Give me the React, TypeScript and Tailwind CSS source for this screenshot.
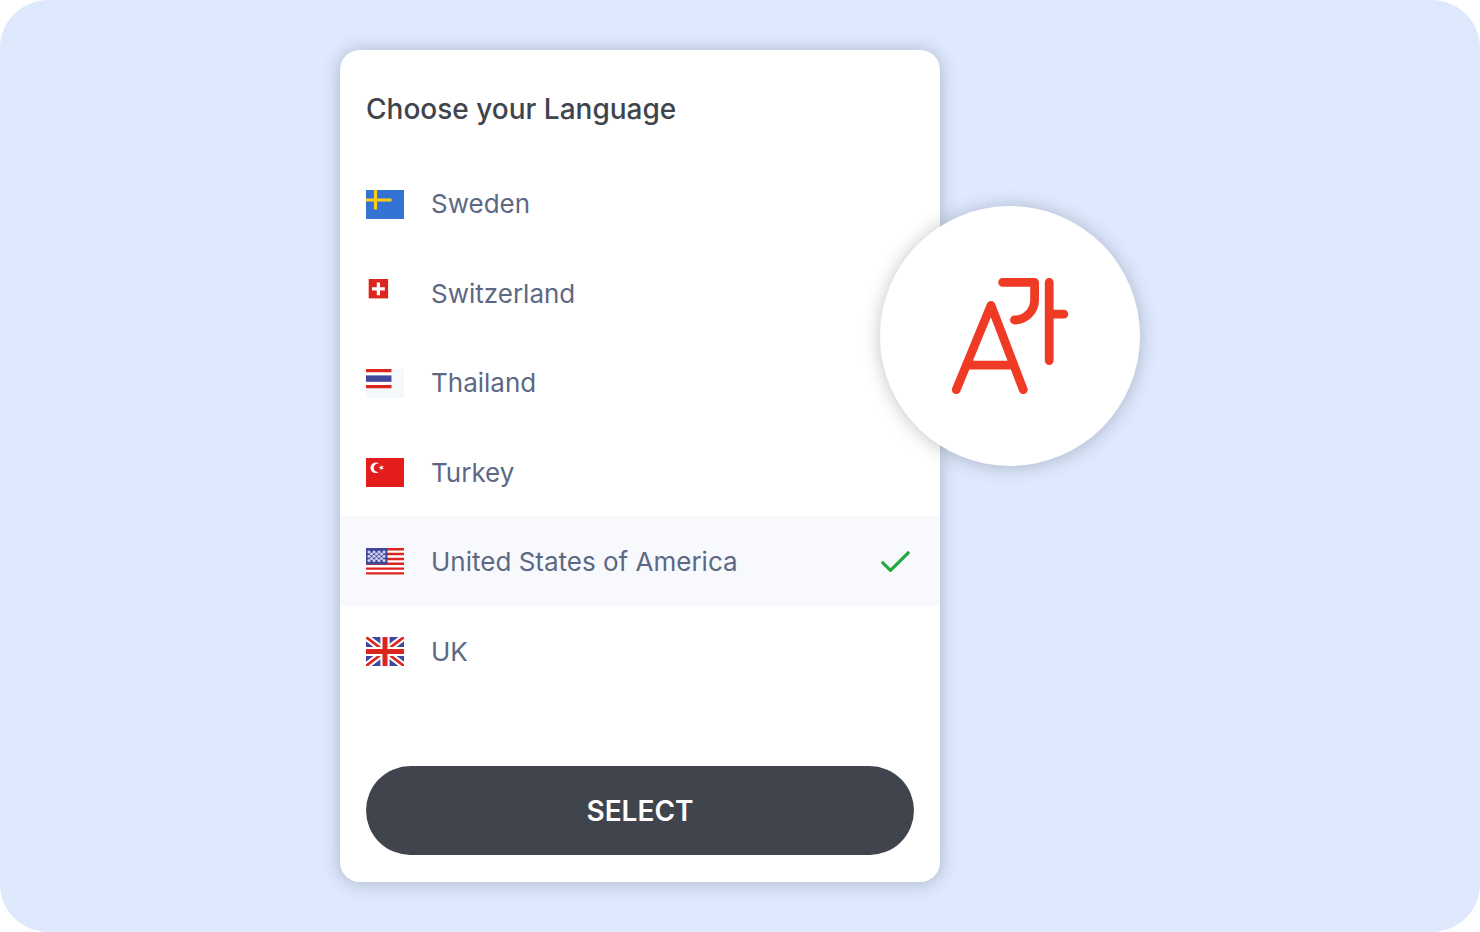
import { useState, type ReactNode } from "react";

interface Country {
  name: string;
  flag: ReactNode;
}

const usStars = [
  [4, 4], [9, 4], [14, 4], [19, 4],
  [6.5, 6], [11.5, 6], [16.5, 6],
  [4, 8.2], [9, 8.2], [14, 8.2], [19, 8.2],
  [6.5, 10.4], [11.5, 10.4], [16.5, 10.4],
  [4, 12.6], [9, 12.6], [14, 12.6], [19, 12.6],
];

const countries: Country[] = [
  {
    name: "Sweden",
    flag: (
      <>
        <rect width="38" height="29" fill="#3273d3" />
        <path d="M0 10h25.5M9.5 0v19.5" stroke="#fecb16" strokeWidth="3.2" />
      </>
    ),
  },
  {
    name: "Switzerland",
    flag: (
      <>
        <rect x="2.7" width="19.4" height="19.4" fill="#dc251c" />
        <path d="M6 9.8h12.8M12.4 3.4v12.8" stroke="#fff" strokeWidth="3.2" />
      </>
    ),
  },
  {
    name: "Thailand",
    flag: (
      <>
        <rect width="38" height="29" fill="#f3f8fb" />
        <rect width="25.5" height="19.4" fill="#fff" />
        <path d="M0 1.6h25.5M0 17.7h25.5" stroke="#dc251c" strokeWidth="3.2" />
        <path d="M0 9.6h25.5" stroke="#41479b" strokeWidth="6.4" />
      </>
    ),
  },
  {
    name: "Turkey",
    flag: (
      <>
        <rect width="38" height="29" fill="#e31d1c" />
        <path
          d="M13.2 5.8A5.3 5.3 0 1 0 13.2 13.8A4.2 4.2 0 1 1 13.2 5.8z"
          fill="#fff"
        />
        <path
          d="M12.6 9.6l1.9-.6.2-2 1.1 1.6 1.9-.5-1.1 1.6 1.1 1.6-1.9-.5-1.1 1.6-.2-2z"
          fill="#fff"
        />
      </>
    ),
  },
  {
    name: "United States of America",
    flag: (
      <>
        <rect width="38" height="27" fill="#fff" />
        <path
          d="M0 1.2h38M0 6h38M0 11h38M0 15.7h38M0 20.6h38M0 25.4h38"
          stroke="#dc251c"
          strokeWidth="2.4"
        />
        <rect width="21.5" height="16.5" fill="#41479b" />
        {usStars.map(([x, y]) => (
          <circle key={`${x}-${y}`} cx={x - 1} cy={y} r="1.5" fill="#cfd4ee" />
        ))}
      </>
    ),
  },
  {
    name: "UK",
    flag: (
      <>
        <rect width="38" height="29" fill="#41479b" />
        <path d="M0 0l38 29M38 0L0 29" stroke="#fff" strokeWidth="6.8" />
        <path d="M0 0l38 29M38 0L0 29" stroke="#dc251c" strokeWidth="2.6" />
        <path d="M19 0v29M0 14.5h38" stroke="#fff" strokeWidth="9.2" />
        <path d="M19 0v29M0 14.5h38" stroke="#dc251c" strokeWidth="5" />
      </>
    ),
  },
];

function CountryRow({
  country,
  selected,
  onSelect,
}: {
  country: Country;
  selected: boolean;
  onSelect: () => void;
}) {
  return (
    <label
      className={`relative flex cursor-pointer items-center px-[26px] pt-[3px] ${
        selected ? "bg-[#f7f9fd]" : ""
      }`}
    >
      <input
        type="radio"
        name="country"
        className="sr-only"
        checked={selected}
        onChange={onSelect}
      />
      <svg
        viewBox="0 0 38 29"
        className="h-[29px] w-[38px] shrink-0"
        aria-hidden="true"
      >
        {country.flag}
      </svg>
      <span className="ml-[27px] flex-1 text-[26px] leading-8 text-[#5c6884]">
        {country.name}
      </span>
      {selected && (
        <svg
          viewBox="0 0 30 24"
          className="mr-1 h-6 w-[30px]"
          fill="none"
          stroke="#22a83f"
          strokeWidth="3.2"
          strokeLinecap="round"
          strokeLinejoin="round"
          aria-hidden="true"
        >
          <path d="M2.8 12.8l7.7 7.5L28.2 2.8" />
        </svg>
      )}
    </label>
  );
}

function TranslateBadge() {
  return (
    <div className="absolute right-0 top-[156px] flex size-[260px] items-center justify-center rounded-full bg-white shadow-[0_1px_18px_rgba(64,68,76,0.32)]">
      <svg
        viewBox="0 1 160 150"
        className="h-[150px] w-[160px]"
        fill="none"
        stroke="#ef3a25"
        strokeWidth="8.8"
        strokeLinecap="round"
        strokeLinejoin="round"
        aria-hidden="true"
      >
        {/* Latin A */}
        <path d="M26.3 129.7L61 45.3l32.3 84.4M38 105.2h44" />
        {/* Hangul ga */}
        <path d="M72.6 22.3h32V40c0 11-9 20-20.2 20" />
        <path d="M119.2 22.3v78.3M119.2 54.2h14.6" />
      </svg>
    </div>
  );
}

export default function App() {
  const [selected, setSelected] = useState("United States of America");

  return (
    <main className="flex min-h-screen items-center justify-center rounded-[48px] bg-[#dee9fe] py-[50px] font-['Inter',sans-serif]">
      <div className="relative w-full max-w-[800px]">
        <form
          className="w-3/4 rounded-[20px] bg-white pt-[39px] pb-[27px] shadow-[0_1px_18px_rgba(64,68,76,0.32)]"
          onSubmit={(e) => e.preventDefault()}
        >
          <h1
            id="language-title"
            className="px-[26px] text-[28px] leading-10 font-medium text-[#40444c]"
          >
            Choose your Language
          </h1>

          {/* Country list */}
          <div
            role="radiogroup"
            aria-labelledby="language-title"
            className="mt-[29px] grid h-[537px] auto-rows-fr"
          >
            {countries.map((country) => (
              <CountryRow
                key={country.name}
                country={country}
                selected={country.name === selected}
                onSelect={() => setSelected(country.name)}
              />
            ))}
          </div>

          <div className="mt-[71px] px-[26px]">
            <button
              type="submit"
              className="h-[89px] w-full rounded-full bg-[#40444c] text-[28px] font-semibold text-white"
            >
              SELECT
            </button>
          </div>
        </form>

        <TranslateBadge />
      </div>
    </main>
  );
}
